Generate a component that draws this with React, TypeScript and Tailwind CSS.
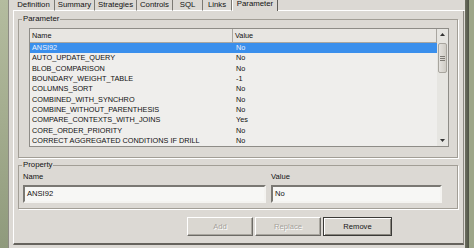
import React from "react";

const tabs: { label: string; w: string }[] = [
  { label: "Definition", w: "w-[42px]" },
  { label: "Summary", w: "w-[40px]" },
  { label: "Strategies", w: "w-[42px]" },
  { label: "Controls", w: "w-[36px]" },
  { label: "SQL", w: "w-[30px]" },
  { label: "Links", w: "w-[29px]" },
];

const rows: [string, string][] = [
  ["ANSI92", "No"],
  ["AUTO_UPDATE_QUERY", "No"],
  ["BLOB_COMPARISON", "No"],
  ["BOUNDARY_WEIGHT_TABLE", "-1"],
  ["COLUMNS_SORT", "No"],
  ["COMBINED_WITH_SYNCHRO", "No"],
  ["COMBINE_WITHOUT_PARENTHESIS", "No"],
  ["COMPARE_CONTEXTS_WITH_JOINS", "Yes"],
  ["CORE_ORDER_PRIORITY", "No"],
  ["CORRECT AGGREGATED CONDITIONS IF DRILL", "No"],
];

function Tabs() {
  return (
    <div className="flex h-[11px] shrink-0">
      <div className="w-[4px] shrink-0" />
      {tabs.map((t) => (
        <div
          key={t.label}
          className={`${t.w} flex shrink-0 justify-center overflow-hidden border-b border-r border-b-white border-r-[#7b7973] text-[7.8px] leading-[10px]`}
        >
          {t.label}
        </div>
      ))}
      <div className="flex w-[46px] shrink-0 justify-center overflow-hidden border-l border-r border-l-white border-r-[#5f5d58] text-[7.8px] leading-[8px]">
        Parameter
      </div>
      <div className="flex-1 border-b border-white" />
    </div>
  );
}

function Arrow({ up }: { up: boolean }) {
  return (
    <svg width="5" height="3" viewBox="0 0 5 3">
      {up ? <path d="M0 3 L2.5 0 L5 3 Z" fill="#333" /> : <path d="M0 0 L2.5 3 L5 0 Z" fill="#333" />}
    </svg>
  );
}

function Scrollbar() {
  return (
    <div className="flex w-[11px] shrink-0 flex-col bg-[#e6e5e1]">
      <div className="flex h-[11px] items-center justify-center">
        <Arrow up />
      </div>
      <div className="mx-[1px] mt-[3px] flex h-[30px] flex-col items-center justify-center gap-[1px] rounded-[2px] border border-[#a8a59e] bg-gradient-to-r from-[#e4e2de] to-[#cfccc5]">
        <div className="h-[1px] w-[5px] bg-[#7d7a74]" />
        <div className="h-[1px] w-[5px] bg-[#7d7a74]" />
        <div className="h-[1px] w-[5px] bg-[#7d7a74]" />
      </div>
      <div className="flex-1" />
      <div className="flex h-[11px] items-center justify-center">
        <Arrow up={false} />
      </div>
    </div>
  );
}

function ListView() {
  return (
    <div className="flex h-[119px] border border-[#8e8c87] bg-[#efeeec]">
      <div className="flex w-[407px] shrink-0 flex-col">
        <div className="flex h-[14px] shrink-0 border-b border-[#a8a6a0] bg-[#e8e6e2] text-[7.3px] leading-[13px]">
          <div className="w-[203px] shrink-0 border-r border-[#a9a6a0] pl-[2px]">Name</div>
          <div className="w-[204px] shrink-0 border-r border-[#a9a6a0] pl-[2px]">Value</div>
        </div>
        {rows.map(([n, v], i) => (
          <div
            key={n}
            className={`flex h-[10.3px] shrink-0 items-center text-[7.3px] leading-[10px] ${
              i === 0 ? "bg-[#3a8fec] text-[#eef4ff]" : ""
            }`}
          >
            <div className="w-[203px] shrink-0 whitespace-nowrap pl-[2px]">{n}</div>
            <div className="w-[204px] shrink-0 pl-[3px]">{v}</div>
          </div>
        ))}
      </div>
      <Scrollbar />
    </div>
  );
}

function Input({ children }: { children: React.ReactNode }) {
  return (
    <div className="mt-[4px] flex h-[18px] items-center border-2 border-b-[#f4f3f0] border-l-[#7a7873] border-r-[#f4f3f0] border-t-[#7a7873] bg-[#f7f7f5] pl-[2px] text-[7.6px] leading-[10px]">
      {children}
    </div>
  );
}

export default function App() {
  return (
    <div className="flex h-[248px] w-[474px] overflow-hidden bg-[#a1aa8c] font-['Liberation_Sans',Arial,sans-serif] text-[#111111]">
      <div className="w-[8px] shrink-0 bg-gradient-to-b from-[#b4bc9f] via-[#a3ac8e] to-[#8f9a7c]" />
      <div className="w-[1px] shrink-0 bg-[#8d8b84]" />
      <div className="flex w-[456px] shrink-0 flex-col bg-[#dcd9d4]">
        <Tabs />
        <div className="ml-[4px] mr-[1px] flex flex-1 flex-col border-b-2 border-l border-r border-b-[#66635d] border-l-white border-r-[#8b8881] pl-[4px] pr-[5px] pt-[4px]">
          <fieldset className="border border-[#a29e96] shadow-[1px_1px_0_#ffffff]">
            <legend className="ml-[3px] px-[1px] text-[7.8px] leading-[8px]">Parameter</legend>
            <div className="pb-[10px] pl-[10px] pr-[8px] pt-[5px]">
              <ListView />
            </div>
          </fieldset>
          <fieldset className="mt-[3px] border border-[#a29e96] shadow-[1px_1px_0_#ffffff]">
            <legend className="ml-[3px] px-[1px] text-[7.8px] leading-[8px]">Property</legend>
            <div className="grid grid-cols-[243px_171px] gap-x-[5px] pb-[5px] pl-[4px] pt-[3px]">
              <div className="h-[9px] text-[7.6px] leading-[9px]">Name</div>
              <div className="h-[9px] text-[7.6px] leading-[9px]">Value</div>
              <Input>ANSI92</Input>
              <Input>No</Input>
            </div>
          </fieldset>
          <div className="ml-[169px] mt-[8px] flex gap-[2px]">
            <button className="h-[19px] w-[66px] border border-b-[#6c6a65] border-l-white border-r-[#6c6a65] border-t-white bg-[#dad7d1] text-[7.6px] text-[#a5a29b] shadow-[inset_-1px_-1px_0_#a9a69f] [text-shadow:1px_1px_0_#ffffff]">
              Add
            </button>
            <button className="h-[19px] w-[66px] border border-b-[#6c6a65] border-l-white border-r-[#6c6a65] border-t-white bg-[#dad7d1] text-[7.6px] text-[#a5a29b] shadow-[inset_-1px_-1px_0_#a9a69f] [text-shadow:1px_1px_0_#ffffff]">
              Replace
            </button>
            <button className="h-[19px] w-[69px] border border-[#3b3a37] bg-[#dad7d1] text-[7.6px] text-[#151515] shadow-[inset_1px_1px_0_#ffffff,inset_-1px_-1px_0_#8a877f]">
              Remove
            </button>
          </div>
        </div>
        <div className="h-[3px] shrink-0" />
      </div>
      <div className="w-[4px] shrink-0 bg-gradient-to-r from-[#6d6f60] to-[#4e5144]" />
      <div className="w-[5px] shrink-0 bg-[#9da689]" />
    </div>
  );
}
